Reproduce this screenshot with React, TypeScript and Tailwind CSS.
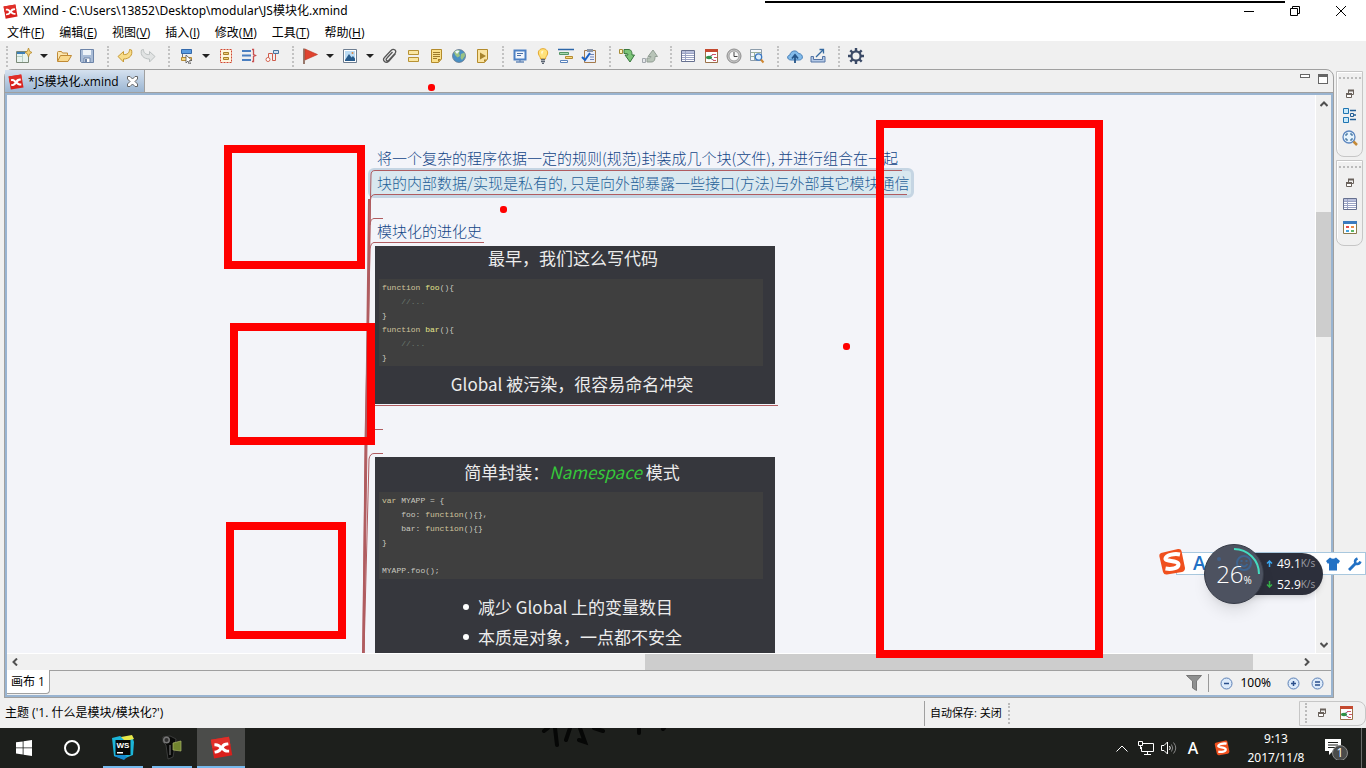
import type { ReactNode } from 'react'

interface ToolItem {
  name: string
  icon: ReactNode
  menu?: boolean
}

const uiFont = "font-['Open_Sans','Noto_Sans_CJK_SC',sans-serif]"

function Icon({ children, size = 'size-4' }: { children: ReactNode; size?: string }) {
  return (
    <svg viewBox="0 0 16 16" className={`${size} shrink-0`} fill="none" aria-hidden="true">
      {children}
    </svg>
  )
}

function XMindLogo({ size }: { size: string }) {
  return (
    <Icon size={size}>
      <path d="M0.6 2.6 13.2 0.6 15.5 13.4 2.8 15.6Z" fill="#d9201c" />
      <path d="M0.6 2.6 13.2 0.6 14.2 6.5 1.6 8.6Z" fill="#e02f29" />
      <path
        d="M3 5.2C5 4.8 6.5 5.4 7.8 6.8C8.8 5.2 10.4 4.4 12.6 4.6L12.9 6.4C11.2 6.6 10.2 7.2 9.6 8.2C10.6 9.2 11.8 9.7 13.3 9.6V11.5C11 11.8 9.4 11 8.3 9.7C7.2 11.2 5.6 12.2 3.4 12.1L3 10.3C4.8 10.2 5.9 9.4 6.5 8.4C5.6 7.4 4.6 6.9 3.1 7.1Z"
        fill="#fff"
      />
    </Icon>
  )
}

function SogouLogo({ size }: { size: string }) {
  return (
    <svg viewBox="0 0 28 28" className={`${size} shrink-0`} fill="none" aria-hidden="true">
      <path d="M3 5Q1 6 1.300 8L5 24Q6 27 9 26.500L24 24Q27 23 27 20L23.500 3Q23 0.500 20 1Z" fill="#f0501e" />
      <path
        d="M22 6.500C17 5.500 8.500 6.500 7.500 10.500C7 14 20.500 12 20.500 16.500C20.500 20.500 13 21.500 7.500 20.500"
        stroke="#fff"
        strokeWidth="4"
      />
    </svg>
  )
}

const tableIcon = (
  <Icon>
    <path d="M1.500 2.500H14.500V13.500H1.500Z" fill="#fff" stroke="#66708f" />
    <path d="M2 3H14V5H2Z" fill="#b9c0dc" />
    <path d="M2 5.500H14M2 7.500H14M2 9.500H14M2 11.500H14M5.500 3V13" stroke="#9aa3c4" />
  </Icon>
)

const mapIcon = (
  <Icon>
    <path d="M2.500 1.500H14.500V14.500H2.500Z" fill="#fff" stroke="#9a7048" />
    <path d="M2 1H15V4H2Z" fill="#c44a30" />
    <path d="M6 9 10 6.500M7 10 11 12.500" stroke="#8a6a8a" />
    <ellipse cx="6" cy="9.500" rx="3" ry="1.700" fill="#2f9148" />
    <path d="M9 6.500H13M11 9.500H14M10 12.500H13" stroke="#cf5569" />
  </Icon>
)

const toolGroups: ToolItem[][] = [
  [
    {
      name: '新建',
      menu: true,
      icon: (
        <Icon>
          <path d="M0.500 3.500H12.500V14.500H0.500Z" fill="#e8f3ee" stroke="#7b8a78" />
          <path d="M1 4H9V6H1Z" fill="#3c7fb8" />
          <path d="M6.500 6V14M1 8.500H6" stroke="#b7cfc4" />
          <path d="M12.500 0 13.700 3.300 16 4.500 13.700 5.700 12.500 9 11.300 5.700 9 4.500 11.300 3.300Z" fill="#f3d37a" stroke="#b5892c" strokeWidth="0.800" />
        </Icon>
      ),
    },
    {
      name: '打开',
      icon: (
        <Icon>
          <path d="M1.500 13V4.500Q1.500 3.500 2.500 3.500H5.500L6.500 5H11.500V7.500" fill="#fbe6b0" stroke="#c08a35" />
          <path d="M1.500 13.500 4.500 7.500H15.500L12 13.500Z" fill="#f9d98d" stroke="#c08a35" />
        </Icon>
      ),
    },
    {
      name: '保存',
      icon: (
        <Icon>
          <path d="M1.500 1.500H14.500V14.500H2.500L1.500 13.500Z" fill="#a9bcd6" stroke="#6d84a8" />
          <path d="M4 2H12V7H4Z" fill="#eef3f8" />
          <path d="M5 10H11V14.500H5Z" fill="#fff" stroke="#6d84a8" />
          <path d="M6 11H8V14H6Z" fill="#6d84a8" />
        </Icon>
      ),
    },
  ],
  [
    {
      name: '撤销',
      icon: (
        <Icon>
          <path d="M1 8.500 6.500 3.500V6.500C10 7 12.500 5 12.500 1.500L14.500 2C16 7 12.500 11 6.500 11V14Z" fill="#f8dc8a" stroke="#c79a35" />
        </Icon>
      ),
    },
    {
      name: '重做',
      icon: (
        <Icon>
          <path d="M15 8.500 9.500 3.500V6.500C6 7 3.500 5 3.500 1.500L1.500 2C0 7 3.500 11 9.500 11V14Z" fill="#e1e3e3" stroke="#bcc1c1" />
        </Icon>
      ),
    },
  ],
  [
    {
      name: '主题',
      menu: true,
      icon: (
        <Icon>
          <path d="M3.500 1.500H13.500V5.500H3.500Z" fill="#5a9ce0" stroke="#3469ab" />
          <path d="M4.500 6V9.500" stroke="#6c747c" />
          <path d="M3.500 9.500H13.500V12.500H3.500Z" fill="#f7d983" stroke="#b58b35" />
          <path d="M8 7V15L10 13L11 16H12.500L11.500 12.500H14Z" fill="#fff" stroke="#555" strokeWidth="0.800" />
        </Icon>
      ),
    },
    {
      name: '外框',
      icon: (
        <Icon>
          <path d="M2.500 1.500H13.500V14.500H2.500Z" fill="#fff6df" stroke="#d04733" strokeDasharray="2 1" />
          <path d="M5.500 4.500H10.500V6.500H5.500ZM5.500 9.500H10.500V11.500H5.500Z" fill="#f2d077" stroke="#a7802c" />
        </Icon>
      ),
    },
    {
      name: '概要',
      icon: (
        <Icon>
          <path d="M1 3H10M1 7.500H10M1 12H10" stroke="#4b7fc0" strokeWidth="2" />
          <path d="M11 1.500H12.500V6.500L14.500 7.500L12.500 8.500V13.500H11" stroke="#c85050" strokeWidth="1.300" />
        </Icon>
      ),
    },
    {
      name: '联系',
      icon: (
        <Icon>
          <path d="M4.500 12V5.500H8.500V12.500H11.500V5" stroke="#cf5c4c" />
          <circle cx="4" cy="11.500" r="2" fill="#fff" stroke="#d46552" />
          <path d="M9.500 2.500H14.500V5.500H9.500Z" fill="#cfe1f4" stroke="#47749f" />
        </Icon>
      ),
    },
  ],
  [
    {
      name: '图标',
      menu: true,
      icon: (
        <Icon>
          <path d="M2 0.500V16" stroke="#7b5040" strokeWidth="1.500" />
          <path d="M3 1 15.500 6.500 3 12Z" fill="#e0432f" stroke="#b93524" strokeWidth="0.600" />
        </Icon>
      ),
    },
    {
      name: '图片',
      menu: true,
      icon: (
        <Icon>
          <path d="M1.500 1.500H14.500V14.500H1.500Z" fill="#fff" stroke="#6d7d90" />
          <path d="M3 3H13V13H3Z" fill="#bcdcf4" />
          <path d="M3 12 7 6 9.500 9.500 11 8 13 10.500V13H3Z" fill="#285c8c" />
          <circle cx="10.500" cy="5" r="1" fill="#d88540" />
        </Icon>
      ),
    },
    {
      name: '附件',
      icon: (
        <Icon>
          <path
            d="M13.500 5.500 7 13Q4.500 15.500 2.500 13.500Q0.500 11.500 2.500 9.500L9 2.500Q11 0.500 13 2Q14.500 3.500 13 5.500L7 12Q5.500 13.500 4.500 12.500Q3.500 11.500 5 10L10.500 4"
            stroke="#565656"
            strokeWidth="1.300"
          />
        </Icon>
      ),
    },
    {
      name: '标签',
      icon: (
        <Icon>
          <path d="M3.500 2.500H13.500V6.500H3.500ZM3.500 9.500H13.500V13.500H3.500Z" fill="#fbe7a2" stroke="#b79234" />
        </Icon>
      ),
    },
    {
      name: '备注',
      icon: (
        <Icon>
          <path d="M3.500 1.500H13.500V11L10.500 14.500H3.500Z" fill="#fae08a" stroke="#b38b2c" />
          <path d="M5 4.500H12M5 6.500H12M5 8.500H12M5 10.500H9" stroke="#9c7a2a" />
          <path d="M10 14V11H13Z" fill="#a87c20" />
        </Icon>
      ),
    },
    {
      name: '超链接',
      icon: (
        <Icon>
          <circle cx="8" cy="8" r="6.500" fill="#4a90c4" stroke="#5d6f82" strokeWidth="0.700" />
          <path d="M3 4Q6 1 9 2.500L8 5 9 8 6.500 9.500 4 7ZM10 6 13.500 4.500 14 8 11 12 9.500 10Z" fill="#9ac384" />
          <path d="M4 3.500Q6.500 2 8.500 3L6 6Z" fill="#edf7fc" />
        </Icon>
      ),
    },
    {
      name: '录音',
      icon: (
        <Icon>
          <path d="M3.500 1.500H13.500V11L10.500 14.500H3.500Z" fill="#fae3a0" stroke="#b38b2c" />
          <path d="M6 4.500V11.500L12 8Z" fill="#a8842c" />
          <path d="M10 14V11.500H13Z" fill="#a87c20" />
        </Icon>
      ),
    },
  ],
  [
    {
      name: '演示',
      icon: (
        <Icon>
          <path d="M2.500 2.500H13.500V11.500H2.500Z" fill="#f1f6fc" stroke="#4c80c4" strokeWidth="2" />
          <path d="M5 5.500H11M5 7.500H9" stroke="#4a6fa8" />
          <path d="M4 14H12M8 12V14" stroke="#6a8ab8" strokeWidth="1.500" />
        </Icon>
      ),
    },
    {
      name: '头脑风暴',
      icon: (
        <Icon>
          <path d="M8 0.700C4.500 0.700 2.800 3.300 3.500 6C4 8 5.500 8.800 5.500 11H10.500C10.500 8.800 12 8 12.500 6C13.200 3.300 11.500 0.700 8 0.700Z" fill="#ffe27a" stroke="#e4a62c" />
          <path d="M6 4Q7 2.500 8.500 2.800L7 7Z" fill="#fff8d5" />
          <path d="M6 11.500H10M6 13.500H10M7 15.300H9" stroke="#5b6472" strokeWidth="1.300" />
        </Icon>
      ),
    },
    {
      name: '甘特图',
      icon: (
        <Icon>
          <path d="M0 1.500H16" stroke="#2c66a8" strokeWidth="1.500" />
          <path d="M1.500 4.500H10.500V6.500H1.500Z" fill="#a9d9b0" stroke="#559565" />
          <path d="M7.500 8.500H14.500V10.500H7.500Z" fill="#f9da80" stroke="#b58b30" />
          <path d="M2.500 12.500H9.500V14.500H2.500Z" fill="#fff" stroke="#5b83bb" />
        </Icon>
      ),
    },
    {
      name: '任务信息',
      icon: (
        <Icon>
          <path d="M3.500 2.500H14.500V14.500H3.500Z" fill="#e9eefa" stroke="#a57b4c" />
          <path d="M6 1H12V4H6Z" fill="#8c97a8" />
          <path d="M9 6.500H13M9 9H13M9 11.500H13" stroke="#7084b8" />
          <path d="M1 9 4 12 9 5" stroke="#1b62c4" strokeWidth="2" />
        </Icon>
      ),
    },
  ],
  [
    {
      name: '下钻',
      icon: (
        <Icon>
          <path d="M0.500 1.500H3.500V5.500H0.500Z" fill="#fff4c4" stroke="#a58c38" />
          <path d="M5 1.500H9C12 1.500 13 3 13 7H15.500L11 14 6 7H9C9 5.500 8 5.500 5 5.500Z" fill="#7cc478" stroke="#37763d" />
        </Icon>
      ),
    },
    {
      name: '上钻',
      icon: (
        <Icon>
          <path d="M0.500 10.500H3.500V14.500H0.500Z" fill="#e6e8ea" stroke="#a3a8ae" />
          <path d="M5 14H9C12 14 13 12.500 13 8.500H15.500L11 2 6 8.500H9C9 10 8 10 5 10Z" fill="#b8c4b8" stroke="#929e94" />
        </Icon>
      ),
    },
  ],
  [
    { name: '大纲', icon: tableIcon },
    { name: '样式', icon: mapIcon },
    {
      name: '历史',
      icon: (
        <Icon>
          <circle cx="8" cy="8" r="7" fill="#c4c4c4" stroke="#8e8e8e" />
          <circle cx="8" cy="8" r="5" fill="#f8f8f8" stroke="#9f9f9f" />
          <path d="M8 4V8.500H11.500" stroke="#444" />
        </Icon>
      ),
    },
    {
      name: '搜索',
      icon: (
        <Icon>
          <path d="M1.500 1.500H12.500V12.500H1.500Z" fill="#f5f8fc" stroke="#8d9dab" />
          <path d="M2 4.500H12M5.500 4V12M2 8.500H8" stroke="#9bb09b" />
          <circle cx="9.500" cy="9" r="3.200" fill="#dbeefb" stroke="#3c78c2" strokeWidth="1.300" />
          <path d="M12 11.500 14.500 14.500" stroke="#cf8630" strokeWidth="2" />
        </Icon>
      ),
    },
  ],
  [
    {
      name: '上传',
      icon: (
        <Icon>
          <path d="M4 12C0 12 -0.500 7.500 3 7C3 3 9.500 1 11.500 5.500C16 5.500 17 11.500 12.500 12Z" fill="#82bbea" stroke="#477fb8" />
          <path d="M8 15V8M5 10.500 8 7 11 10.500" stroke="#245488" strokeWidth="1.800" />
        </Icon>
      ),
    },
    {
      name: '导出',
      icon: (
        <Icon>
          <path d="M1 8.500H3.500V11.500H12.500V8.500H15V14H1Z" fill="#b5c9e6" stroke="#5574a5" />
          <path d="M6 9 13 2M9.500 1.500H13.500V5.500" stroke="#35699f" strokeWidth="1.300" />
        </Icon>
      ),
    },
  ],
  [
    {
      name: '设置',
      icon: (
        <Icon>
          <path
            d="M8 0V3M8 13V16M0 8H3M13 8H16M2.300 2.300 4.500 4.500M11.500 11.500 13.700 13.700M2.300 13.700 4.500 11.500M11.500 4.500 13.700 2.300"
            stroke="#3b4a66"
            strokeWidth="2.400"
          />
          <circle cx="8" cy="8" r="4.600" stroke="#3b4a66" strokeWidth="2.200" />
        </Icon>
      ),
    },
  ],
]

const menus = [
  ['文件', 'F'],
  ['编辑', 'E'],
  ['视图', 'V'],
  ['插入', 'I'],
  ['修改', 'M'],
  ['工具', 'T'],
  ['帮助', 'H'],
]

function RestoreIcon() {
  return (
    <svg viewBox="0 0 10 10" className="size-[10px]" fill="none" aria-hidden="true">
      <path d="M3.500 4V1.500H8.500V5.500H6.500" stroke="#6a625c" />
      <path d="M3 1.500H9" stroke="#6a625c" strokeWidth="2" />
      <path d="M1.500 4.500H6.500V8.500H1.500Z" fill="#fff" stroke="#6a625c" />
      <path d="M1 5H7" stroke="#6a625c" strokeWidth="2" />
    </svg>
  )
}

function TitleBar() {
  return (
    <header className="flex h-[22px] shrink-0 items-center bg-white pr-[2px] pl-[3px]">
      <XMindLogo size="size-[15px]" />
      <h1 className="ml-[5px] flex-1 font-['Noto_Sans','Noto_Sans_CJK_SC',sans-serif] text-[12px] leading-[22px] whitespace-pre">
        XMind - C:\Users\13852\Desktop\modular\JS模块化.xmind
      </h1>
      <div className="flex">
        <button aria-label="最小化" className="flex h-5 w-[46px] items-center justify-center">
          <span className="h-px w-[10px] bg-black" />
        </button>
        <button aria-label="还原" className="flex h-5 w-[46px] items-center justify-center">
          <svg viewBox="0 0 10 10" className="size-[10px]" fill="none" stroke="#000">
            <path d="M0.500 2.500H7.500V9.500H0.500ZM2.500 2.500V0.500H9.500V7.500H7.500" />
          </svg>
        </button>
        <button aria-label="关闭" className="flex h-5 w-[46px] items-center justify-center">
          <svg viewBox="0 0 10 10" className="size-[10px]" fill="none" stroke="#000">
            <path d="M0 0 10 10M10 0 0 10" />
          </svg>
        </button>
      </div>
    </header>
  )
}

function MenuBar() {
  return (
    <nav className="flex h-[19px] shrink-0 gap-[15px] bg-white pl-[7px]">
      {menus.map(([label, key]) => (
        <button key={key} className="text-[12px] leading-[22px] whitespace-nowrap">
          {label}(<u>{key}</u>)
        </button>
      ))}
    </nav>
  )
}

function ToolBar() {
  return (
    <div role="toolbar" className="flex h-7 shrink-0 items-center pt-0.5">
      {toolGroups.map((group, i) => (
        <div key={i} className="flex items-center">
          <span className={`${i === 0 ? 'w-2' : 'w-[11px]'} mr-1 h-[21px] border-r-2 border-dotted border-[#c2c2c2]`} />
          {group.map(item => (
            <span key={item.name} className="flex">
              <button aria-label={item.name} className="flex h-6 w-[23px] items-center justify-center">
                {item.icon}
              </button>
              {item.menu && (
                <button aria-label={`${item.name}菜单`} className="flex h-6 w-[17px] items-center justify-center">
                  <svg viewBox="0 0 8 4" className="h-1 w-2" fill="#222">
                    <path d="M0 0H8L4 4Z" />
                  </svg>
                </button>
              )}
            </span>
          ))}
        </div>
      ))}
    </div>
  )
}

function Code({ lines }: { lines: ReactNode[] }) {
  return (
    <div className="ml-1 h-[87px] w-[384px] bg-[#3f3f3f] pt-[2px] pl-[3px] font-['Liberation_Mono',monospace] text-[8px] leading-[14px] text-[#c9c9c0]">
      {lines.map((line, i) => (
        <code key={i} className="block h-[14px] font-['Liberation_Mono',monospace] whitespace-pre">
          {line}
        </code>
      ))}
    </div>
  )
}

const Kw = ({ children }: { children: string }) => <span className="text-[#d0c49c]">{children}</span>
const Fn = ({ children }: { children: string }) => <span className="text-[#e3e58b]">{children}</span>
const Rem = ({ children }: { children: string }) => <span className="text-[#6c7a70]">{children}</span>

const globalCode = [
  <><Kw>function</Kw> <Fn>foo</Fn>{'(){'}</>,
  <Rem>{'    //...'}</Rem>,
  '}',
  <><Kw>function</Kw> <Fn>bar</Fn>{'(){'}</>,
  <Rem>{'    //...'}</Rem>,
  '}',
]

const namespaceCode = [
  <><Kw>var</Kw>{' MYAPP = {'}</>,
  <>{'    foo: '}<Kw>function</Kw>{'(){},'}</>,
  <>{'    bar: '}<Kw>function</Kw>{'(){}'}</>,
  '}',
  '',
  'MYAPP.foo();',
]

function Slides() {
  return (
    <>
      <figure className="absolute top-[151px] left-[368px] h-[158px] w-[400px] bg-[#36373d] font-['Noto_Sans_CJK_SC',sans-serif] text-[17px] font-normal text-[#ececec]">
        <figcaption className="mb-[9px] pr-1 text-center leading-6">最早，我们这么写代码</figcaption>
        <Code lines={globalCode} />
        <p className="pr-[6px] text-center leading-9">Global 被污染，很容易命名冲突</p>
      </figure>
      <figure className="absolute top-[362px] left-[368px] h-[220px] w-[400px] bg-[#36373d] font-['Noto_Sans_CJK_SC',sans-serif] text-[17px] font-normal text-[#ececec]">
        <figcaption className="mb-[5px] pr-[6px] text-center leading-[30px]">
          简单封装：<em className="text-[#35c83a]">Namespace</em> 模式
        </figcaption>
        <Code lines={namespaceCode} />
        <ul className="pt-[13px] pl-[88px] leading-[30px]">
          {['减少 Global 上的变量数目', '本质是对象，一点都不安全'].map(text => (
            <li key={text} className="flex items-center gap-[9px] whitespace-nowrap">
              <span className="size-[6px] rounded-full bg-white" />
              {text}
            </li>
          ))}
        </ul>
      </figure>
    </>
  )
}

function MindMap() {
  return (
    <main className="relative flex-1 overflow-hidden bg-[#f3f4f9] font-['Noto_Sans_CJK_SC',sans-serif] text-[15px] leading-5 font-light whitespace-nowrap text-[#124587]">
      <p className="absolute top-[53px] left-[370px]">将一个复杂的程序依据一定的规则(规范)封装成几个块(文件), 并进行组合在一起</p>
      <p className="absolute top-[73px] left-[361px] h-[30px] w-[546px] rounded-md border-3 border-[#c5d5e3] bg-[#d9e8ef] pt-[2px] pl-[6px] text-[#1f5f98]">
        块的内部数据/实现是私有的, 只是向外部暴露一些接口(方法)与外部其它模块通信
      </p>
      <p className="absolute top-[126px] left-[370px]">模块化的进化史</p>
      <svg viewBox="0 0 900 558" className="absolute top-0 left-0 h-[558px] w-[900px]" fill="none" stroke="#b05c60">
        <path d="M895 75.500H368Q364 75.500 364 80L358 345 356 558" />
        <path d="M903 99.500H368Q364 99.500 363.500 105L357 558" />
        <path d="M376 123.500H367Q363.500 123.500 363 130" />
        <path d="M477 147.500H367Q364 147.500 363 154L359 345 357 558" />
        <path d="M771 310.500H367L362 318" />
        <path d="M376 334.500H367L361 342" />
        <path d="M376 358.500H367Q363 358.500 362 364L357 558" />
        <path d="M362 104 359 345 356 558" strokeWidth="2" />
      </svg>
      <Slides />
    </main>
  )
}

function ScrollArrow({ d, label, className }: { d: string; label: string; className: string }) {
  return (
    <button aria-label={label} className={`flex items-center justify-center ${className}`}>
      <svg viewBox="0 0 8 8" className="size-2" fill="none" stroke="#505050" strokeWidth="2">
        <path d={d} />
      </svg>
    </button>
  )
}

function Editor() {
  return (
    <section className="ml-1 flex min-w-0 flex-1 flex-col rounded-t-lg border border-[#a0a0a0]">
      <div className="flex h-[23px] shrink-0 items-start">
        <div className="flex h-[23px] w-[140px] items-center border-r border-[#a0a0a0] bg-linear-to-b from-[#d5e1ef] to-[#99b4d1] pl-[3px]">
          <XMindLogo size="size-4" />
          <span className="ml-1 text-[12px] leading-[23px]">*JS模块化.xmind</span>
          <button aria-label="关闭标签" className="ml-2">
            <svg viewBox="0 0 11 11" className="size-[11px]" fill="#fff" stroke="#666">
              <path d="M0.500 0.500H3L5.500 3 8 0.500H10.500V3L8 5.500 10.500 8V10.500H8L5.500 8 3 10.500H0.500V8L3 5.500 0.500 3Z" />
            </svg>
          </button>
        </div>
        <div className="ml-auto flex gap-2 pt-1 pr-[5px]">
          <button aria-label="最小化视图" className="h-1 w-[10px] border border-[#666] bg-white" />
          <button aria-label="最大化视图" className="h-[10px] w-[10px] border border-t-3 border-[#666] bg-white" />
        </div>
      </div>
      <div className="flex min-h-0 flex-1 flex-col border-2 border-[#99b4d1] outline outline-[#a0a0a0]">
        <div className="flex min-h-0 flex-1">
          <MindMap />
          <div className="flex w-4 shrink-0 flex-col border-l border-white bg-[#f0f0f0]">
            <ScrollArrow label="向上" d="M0.500 6 4 2.500 7.500 6" className="h-[18px]" />
            <span className="grow-[99]" />
            <span className="grow-[125] bg-[#cdcdcd]" />
            <span className="grow-[299]" />
            <ScrollArrow label="向下" d="M0.500 2 4 5.500 7.500 2" className="h-[17px]" />
          </div>
        </div>
        <div className="flex h-[17px] shrink-0 border-t border-white bg-[#f0f0f0] pr-4">
          <ScrollArrow label="向左" d="M6 0.500 2.500 4 6 7.500" className="w-4" />
          <span className="grow-[622]" />
          <span className="grow-[608] bg-[#cdcdcd]" />
          <span className="grow-[46]" />
          <ScrollArrow label="向右" d="M2 0.500 5.500 4 2 7.500" className="w-4" />
        </div>
        <div className="flex h-[25px] shrink-0 items-start">
          <button className="h-6 w-[43px] rounded-br border-r border-b border-[#a0a0a0] bg-white text-[12px] whitespace-nowrap">
            画布 1
          </button>
          <div className="flex h-[25px] flex-1 items-center justify-end border-t border-[#a0a0a0] pr-[7px]">
            <button aria-label="筛选" className="mr-1.5">
              <svg viewBox="0 0 16 16" className="size-4" fill="#8f9090" stroke="#777">
                <path d="M0.500 0.500H15.500L10.500 6V15.500L6.500 13V6Z" />
              </svg>
            </button>
            <span className="mr-[11px] h-[18px] w-px bg-[#999]" />
            <ZoomButton label="缩小" d="M4 6.500H9" />
            <span className="mr-4 ml-[7px] font-['Noto_Sans',sans-serif] text-[12px]">100%</span>
            <ZoomButton label="放大" d="M4 6.500H9M6.500 4V9" />
            <span className="w-[11px]" />
            <ZoomButton label="实际大小" d="M4 5H9M4 8H9" />
          </div>
        </div>
      </div>
    </section>
  )
}

function ZoomButton({ label, d }: { label: string; d: string }) {
  return (
    <button aria-label={label}>
      <svg viewBox="0 0 13 13" className="size-[13px]" fill="none">
        <circle cx="6.500" cy="6.500" r="5.500" fill="#dceafa" stroke="#5a7fb5" />
        <path d={d} stroke="#2a4f8c" strokeWidth="1.500" />
      </svg>
    </button>
  )
}

function SidePanel({ children }: { children: ReactNode }) {
  return (
    <div className="flex w-[27px] flex-col items-center rounded-b-lg border border-[#c6c6c6] pt-[5px] pb-2.5 shadow-[inset_1px_1px_0_#fff]">
      <span className="w-[22px] border-t-2 border-dotted border-[#bbb]" />
      <button aria-label="还原视图" className="mt-[10px] mb-2">
        <RestoreIcon />
      </button>
      <div className="flex flex-col gap-[7px]">{children}</div>
    </div>
  )
}

function SideBar() {
  return (
    <aside className="flex w-8 shrink-0 flex-col gap-[3px] pt-[2px] pl-[2px]">
      <SidePanel>
        <button aria-label="导图概览">
          <Icon>
            <path d="M1.500 1.500H6.500V6.500H1.500ZM1.500 10.500H6.500V15.500H1.500Z" fill="#c8eafb" stroke="#1f75b2" />
            <path d="M8 3.500H14M8 12.500H14M12 8H14" stroke="#235f96" strokeWidth="1.500" />
            <path d="M8.500 6.500H11.500V9.500H8.500Z" stroke="#235f96" />
          </Icon>
        </button>
        <button aria-label="缩略图">
          <Icon>
            <circle cx="7" cy="7" r="6" fill="#e6f3fc" stroke="#5c86bf" strokeWidth="1.300" />
            <path d="M4 6V4H6M8 4H10V6M10 8V10H8M6 10H4V8" stroke="#255c8d" />
            <path d="M11.500 11.500 15 15" stroke="#c58a38" strokeWidth="2.500" />
          </Icon>
        </button>
      </SidePanel>
      <SidePanel>
        <button aria-label="大纲视图">{tableIcon}</button>
        <button aria-label="图标视图">
          <Icon>
            <path d="M1.500 2.500H14.500V14.500H1.500Z" fill="#fff" stroke="#8b7a4c" />
            <path d="M1 2H15V5H1Z" fill="#3a7abf" />
            <path d="M4 7H7V9H4Z" fill="#e64a48" />
            <path d="M9 7H12V9H9Z" fill="#eb8b48" />
            <path d="M4 11H7V13H4Z" fill="#45a4e0" />
            <path d="M9 11H12V13H9Z" fill="#5cb765" />
          </Icon>
        </button>
      </SidePanel>
    </aside>
  )
}

function StatusBar() {
  return (
    <footer className="flex h-[30px] shrink-0 items-center text-[12px] whitespace-nowrap">
      <p className="flex-1 pl-[5px]">主题 ('1. 什么是模块/模块化?')</p>
      <span className="h-[25px] w-px bg-[#a0a0a0]" />
      <p className="ml-[5px] w-[78px] text-[11px]">自动保存: 关闭</p>
      <span className="h-[21px] w-0 border-r-2 border-dotted border-[#bbb]" />
      <div className="ml-[289px] flex h-[25px] w-[67px] items-center rounded-r-lg border border-[#c6c6c6] pl-[5px]">
        <span className="h-[20px] border-r-2 border-dotted border-[#bbb]" />
        <button aria-label="还原" className="mr-[11px] ml-[10px]">
          <RestoreIcon />
        </button>
        <button aria-label="导图">{mapIcon}</button>
      </div>
    </footer>
  )
}

function TaskBar() {
  return (
    <footer className="relative flex h-10 shrink-0 bg-[#1d1f1c] text-white">
      {/* wallpaper brush strokes showing through */}
      <svg viewBox="0 0 140 22" className="absolute top-0 left-[540px] h-[22px] w-[140px]" fill="none" stroke="#060706" strokeLinecap="round">
        <path d="M8 0 4 3M15 0 17 17M30 0 26 12M40 0 45 14 39 12M54 0 63 3" strokeWidth="4" />
        <path d="M99 0V5M124 0 123 1" strokeWidth="4" />
      </svg>
      <button aria-label="开始" className="flex w-12 items-center justify-center">
        <svg viewBox="0 0 16 16" className="size-4" fill="#fff">
          <path d="M0 2.300 6.700 1.400V7.500H0ZM7.500 1.300 16 0V7.500H7.500ZM0 8.300H6.700V14.600L0 13.600ZM7.500 8.300H16V16L7.500 14.700Z" />
        </svg>
      </button>
      <button aria-label="Cortana" className="mr-[3px] flex w-12 items-center justify-center">
        <span className="size-4 rounded-full border-2 border-white" />
      </button>
      <button aria-label="WebStorm" className="mr-px flex w-12 flex-col items-center pt-[7px]">
        <svg viewBox="0 0 24 25" className="h-[25px] w-6">
          <path d="M1 3 9 1 14 4 21 1 23 7 22 20 12 24 3 21Z" fill="#1cb5d8" />
          <path d="M10 2 21 0 23 4 14 6Z" fill="#e8e84a" />
          <path d="M3 21 12 18 16 22 13 25Z" fill="#168bd1" />
          <path d="M4.500 5H19.500V20H4.500Z" fill="#080808" />
          <path d="M6 17H12V18.500H6Z" fill="#fff" />
          <text x="12" y="13" textAnchor="middle" fontSize="8" fontWeight="700" fill="#fff" fontFamily="Liberation Sans">
            WS
          </text>
        </svg>
        <span className="mt-auto h-[2px] w-10 bg-[#76b9ed]" />
      </button>
      <button aria-label="录像机" className="mr-px flex w-12 flex-col items-center pt-[7px]">
        <svg viewBox="0 0 24 25" className="h-[25px] w-6">
          <path d="M3 2 10 1 16 4 15 10 13 22 8 24 6 10 3 7Z" fill="#090a09" stroke="#555" strokeWidth="0.600" />
          <circle cx="6.500" cy="5" r="3.500" fill="#777" />
          <circle cx="6.500" cy="5" r="2" fill="#303030" />
          <path d="M13 8 21 6V16L13 15Z" fill="#71852e" stroke="#aab46a" strokeWidth="0.700" />
          <path d="M10 10V20" stroke="#5a5a5a" strokeWidth="1.500" />
        </svg>
        <span className="mt-auto h-[2px] w-10 bg-[#76b9ed]" />
      </button>
      <button aria-label="XMind" className="flex w-12 flex-col items-center bg-[#4b4c4a] pt-[8px]">
        <XMindLogo size="size-[23px]" />
        <span className="mt-auto h-[2px] w-12 bg-[#76b9ed]" />
      </button>

      <div className="ml-auto flex items-center">
        <button aria-label="显示隐藏的图标" className="mr-[10px]">
          <svg viewBox="0 0 12 7" className="h-[7px] w-3" fill="none" stroke="#fff">
            <path d="M0.500 6.500 6 1 11.500 6.500" />
          </svg>
        </button>
        <button aria-label="网络" className="mr-[7px]">
          <svg viewBox="0 0 16 14" className="h-3.5 w-4" fill="none" stroke="#fff">
            <path d="M5 2.500H15.500V10.500H3.500V6M9.500 11V13M6 13.500H13M0.500 0.500H4.500V4.500H0.500ZM2.500 5V8" />
          </svg>
        </button>
        <button aria-label="音量" className="mr-2">
          <svg viewBox="0 0 16 14" className="h-3.5 w-4" fill="none" stroke="#fff">
            <path d="M0.500 4.500H3L6.500 1V13L3 9.500H0.500ZM8.500 5Q10 7 8.500 9" />
            <path d="M10.500 3.500Q13 7 10.500 10.500M12.500 1.500Q17 7 12.500 12.500" stroke="#888" />
          </svg>
        </button>
        <span className="w-4 text-center font-['Noto_Sans',sans-serif] text-[16px] leading-5 font-medium">A</span>
        <button aria-label="搜狗输入法" className="ml-[13px]">
          <SogouLogo size="size-4" />
        </button>
        <time className="ml-[13px] w-[66px] text-center font-['Noto_Sans',sans-serif] text-[12px] leading-[19px]">
          9:13
          <br />
          2017/11/8
        </time>
        <button aria-label="通知" className="relative ml-4 h-6 w-6">
          <svg viewBox="0 0 24 24" className="size-6">
            <path d="M0 3H16V15H8L4 19V15H0Z" fill="#fff" />
            <path d="M3 6.500H13M3 9H13M3 11.500H10" stroke="#1d1f1c" />
            <circle cx="15" cy="17" r="7.500" fill="#4a4b4a" stroke="#8c8c8c" />
            <text x="15" y="21" textAnchor="middle" fontSize="12" fill="#fff" fontFamily="Open Sans">
              1
            </text>
          </svg>
        </button>
        <span className="mr-1 ml-3 h-10 w-px bg-[#6a6b6a]" />
      </div>
    </footer>
  )
}

function SpeedMonitor() {
  return (
    <div className="absolute top-[544px] right-0 h-[60px] w-[208px]">
      <div className="absolute top-[8px] right-0 flex h-[23px] w-[190px] items-center border border-[#a9c8de] bg-white pr-[3px] pl-[16px] text-[#2371c4]">
        <span className="flex-1 text-[19px] font-semibold">A</span>
        <svg viewBox="0 0 14 14" className="mr-2 size-3.5" fill="#2371c4">
          <path d="M4 0.500Q7 3 10 0.500L14 4 12 7 11 6V13.500H3V6L2 7 0 4Z" />
        </svg>
        <svg viewBox="0 0 14 14" className="size-3.5" fill="none" stroke="#2371c4">
          <path d="M1 13 8 6" strokeWidth="3" />
          <path d="M9.500 1.500Q6 3 7.500 6.500Q11 8 12.500 4.500" strokeWidth="2.500" />
        </svg>
      </div>
      <div className="absolute top-[4px] left-0">
        <SogouLogo size="size-7" />
      </div>
      <div className="absolute top-[9px] left-[76px] flex h-[42px] w-[89px] flex-col justify-center rounded-r-full bg-[#2c2f3b] pl-[32px] text-[12px] leading-[21px] whitespace-nowrap text-white shadow-md">
        <SpeedRow value="49.1" color="#3aa5ee" d="M3.500 7V1M1 3.500 3.500 1 6 3.500" />
        <SpeedRow value="52.9" color="#37b24a" d="M3.500 0V6M1 3.500 3.500 6 6 3.500" />
      </div>
      <div className="absolute top-0 left-[46px] flex size-[60px] items-center justify-center rounded-full border border-[#363b47] bg-[#4d5260] text-white shadow-lg">
        <svg viewBox="0 0 60 60" className="absolute size-[60px]" fill="none">
          <g stroke="#3e648f" strokeWidth="2">
            <circle cx="40" cy="19" r="7" />
            <path d="M36.500 20Q40 25 43.500 20M37.500 16V18M42.500 16V18" />
          </g>
          <circle cx="15" cy="15" r="2" fill="#41618a" />
          <path d="M30 5A25 25 0 0 1 55 30" stroke="#45dcc0" strokeWidth="2" />
        </svg>
        <span className="relative font-['Open_Sans',sans-serif] text-[24px] leading-7 font-light">26</span>
        <span className="relative mt-3 text-[10px]">%</span>
      </div>
    </div>
  )
}

function SpeedRow({ value, color, d }: { value: string; color: string; d: string }) {
  return (
    <span className="flex items-center">
      <svg viewBox="0 0 7 7" className="mr-1 size-[7px]" fill="none" stroke={color} strokeWidth="1.500">
        <path d={d} />
      </svg>
      {value}
      <span className="text-[10px] text-[#9a9ca3]">K/s</span>
    </span>
  )
}

const boxes = [
  'top-[145px] left-[224px] h-[124px] w-[141px]',
  'top-[323px] left-[230px] h-[122px] w-[145px]',
  'top-[522px] left-[226px] h-[117px] w-[120px]',
  'top-[120px] left-[876px] h-[538px] w-[227px]',
]

const dots = ['top-[84px] left-[428px]', 'top-[206px] left-[500px]', 'top-[343px] left-[843px]']

// screen marker drawings lie over every window
function Marks() {
  return (
    <div className="pointer-events-none absolute inset-0">
      <span className="absolute top-px left-[765px] h-[2px] w-[520px] bg-black" />
      {boxes.map(box => (
        <span key={box} className={`absolute border-8 border-[#ff0000] ${box}`} />
      ))}
      {dots.map(dot => (
        <span key={dot} className={`absolute size-[7px] rounded-[3px] bg-[#ff0000] ${dot}`} />
      ))}
    </div>
  )
}

export default function App() {
  return (
    <div className={`relative flex h-screen flex-col overflow-hidden bg-[#f0f0f0] text-black ${uiFont}`}>
      <TitleBar />
      <MenuBar />
      <ToolBar />
      <div className="flex min-h-0 flex-1">
        <Editor />
        <SideBar />
      </div>
      <StatusBar />
      <TaskBar />
      <Marks />
      <SpeedMonitor />
    </div>
  )
}
